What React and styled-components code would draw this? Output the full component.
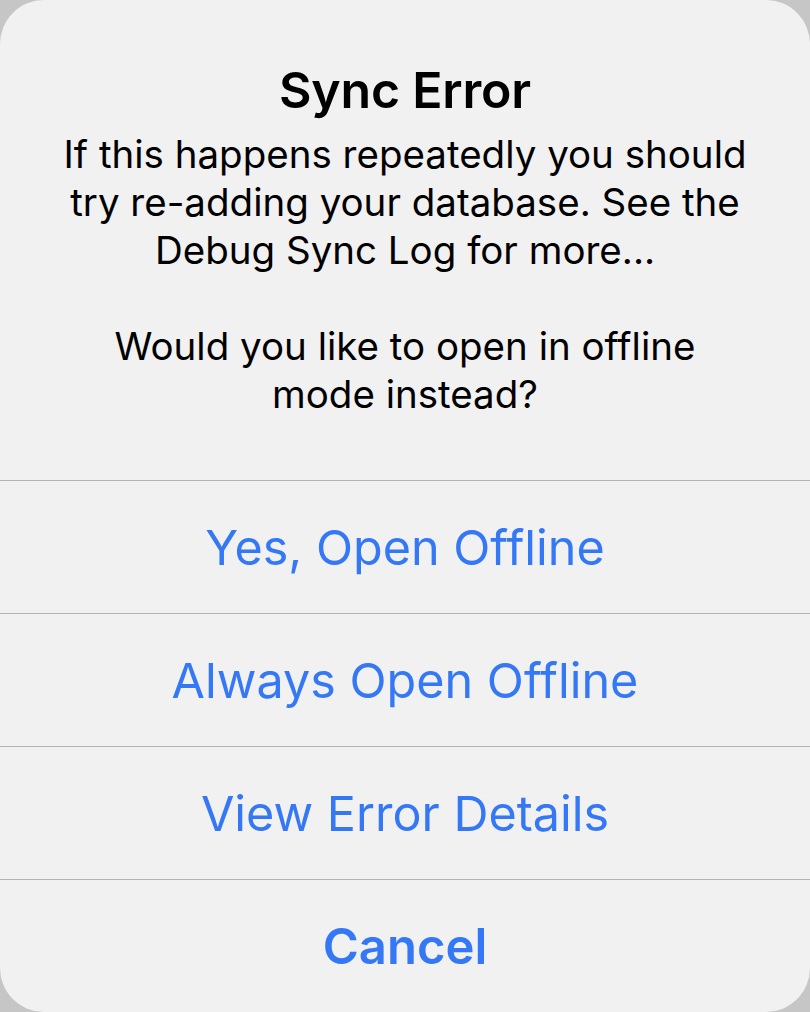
import React from 'react';
import styled, { createGlobalStyle } from 'styled-components';

const GlobalStyle = createGlobalStyle`
  html, body {
    margin: 0;
    padding: 0;
    background: #c6c6c6;
  }
  * {
    box-sizing: border-box;
  }
`;

const Alert = styled.div`
  width: 810px;
  height: 1012px;
  background: #f1f1f1;
  border-radius: 44px;
  overflow: hidden;
  display: flex;
  flex-direction: column;
  font-family: Inter, 'Noto Sans', sans-serif;
  -webkit-font-smoothing: antialiased;
`;

const Header = styled.div`
  height: 480px;
  padding: 60px 30px 0 30px;
  display: flex;
  flex-direction: column;
  align-items: center;
  text-align: center;
  color: #000;
`;

const Title = styled.h1`
  margin: 0;
  font-size: 50px;
  font-weight: 600;
  line-height: 60px;
  letter-spacing: -0.2px;
`;

const Message = styled.p`
  margin: 10px 0 0 0;
  font-size: 38.5px;
  font-weight: 400;
  line-height: 48px;
  white-space: pre-line;
`;

const Action = styled.button`
  height: 133px;
  flex-shrink: 0;
  border: none;
  border-top: 1px solid #b3b3b3;
  background: transparent;
  color: #3478f6;
  font-family: inherit;
  font-size: ${({ $bold }) => ($bold ? 49 : 48.5)}px;
  font-weight: ${({ $bold }) => ($bold ? 600 : 400)};
  display: flex;
  align-items: center;
  justify-content: center;
  padding: 0;
  cursor: pointer;
`;

const actions = [
  { label: 'Yes, Open Offline' },
  { label: 'Always Open Offline' },
  { label: 'View Error Details' },
  { label: 'Cancel', bold: true },
];

export default function App() {
  return (
    <>
      <GlobalStyle />
      <Alert>
        <Header>
          <Title>Sync Error</Title>
          <Message>
            {'If this happens repeatedly you should\ntry re-adding your database. See the\nDebug Sync Log for more...\n\nWould you like to open in offline\nmode instead?'}
          </Message>
        </Header>
        {actions.map((a) => (
          <Action key={a.label} $bold={a.bold}>
            {a.label}
          </Action>
        ))}
      </Alert>
    </>
  );
}
